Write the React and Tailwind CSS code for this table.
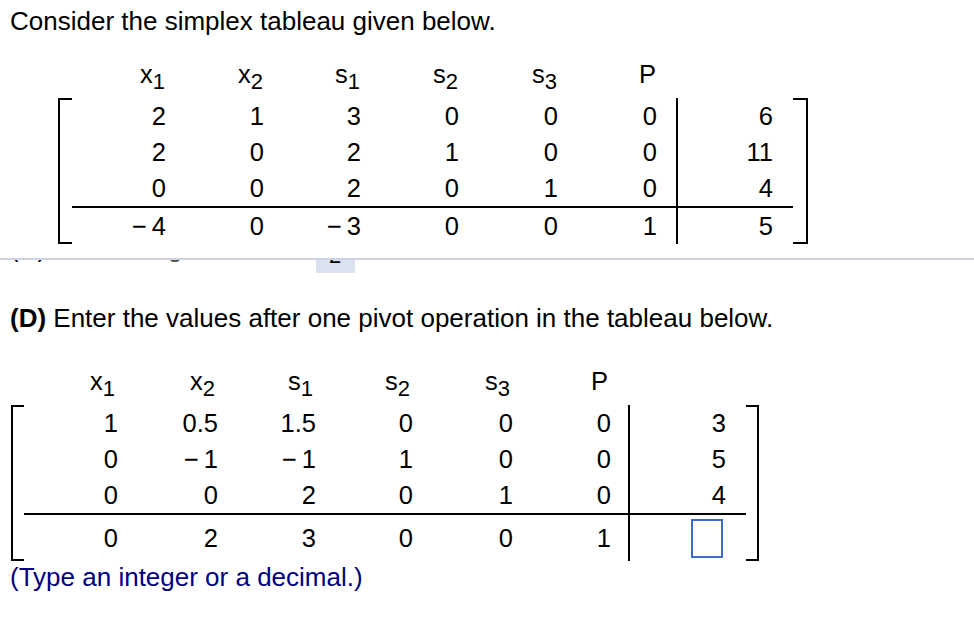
import React from "react";

const top = {
  bracketMl: "ml-[58px]",
  lBracket: "w-[14px]",
  rBracket: "w-[15px]",
  cols: ["w-[94px]", "w-[98px]", "w-[97px]", "w-[98px]", "w-[99px]", "w-[99px]"],
  gap: "w-[19px]",
  val: "w-[97px]",
  tail: "w-[20px]",
  headPad: "pr-[1px]",
  lastRow: "h-[38px]",
  rows: [
    ["2", "1", "3", "0", "0", "0", "6"],
    ["2", "0", "2", "1", "0", "0", "11"],
    ["0", "0", "2", "0", "1", "0", "4"],
  ],
  last: ["-4", "0", "-3", "0", "0", "1", "5"],
};

const bottom = {
  bracketMl: "ml-[11px]",
  lBracket: "w-[13px]",
  rBracket: "w-[13px]",
  cols: ["w-[94px]", "w-[100px]", "w-[98px]", "w-[97px]", "w-[100px]", "w-[98px]"],
  gap: "w-[17px]",
  val: "w-[98px]",
  tail: "w-[20px]",
  headPad: "pr-[3px]",
  lastRow: "h-[48px]",
  rows: [
    ["1", "0.5", "1.5", "0", "0", "0", "3"],
    ["0", "-1", "-1", "1", "0", "0", "5"],
    ["0", "0", "2", "0", "1", "0", "4"],
  ],
  last: ["0", "2", "3", "0", "0", "1", null],
};

const heads = [
  ["x", "1"],
  ["x", "2"],
  ["s", "1"],
  ["s", "2"],
  ["s", "3"],
  ["P", null],
];

function Num({ v }) {
  if (v && v.startsWith("-")) {
    return (
      <span>
        <span className="mr-[5px]">−</span>
        {v.slice(1)}
      </span>
    );
  }
  return <span>{v}</span>;
}

function Head({ name, sub }) {
  return (
    <span>
      {name}
      {sub && <span className="relative top-[6px] text-[22px]">{sub}</span>}
    </span>
  );
}

function Row({ t, cells, className = "h-[36px]" }) {
  return (
    <div className={`flex items-center leading-[36px] ${className}`}>
      {t.cols.map((w, i) => (
        <div key={i} className={`${w} shrink-0 text-right`}>
          <Num v={cells[i]} />
        </div>
      ))}
      <div className={`${t.gap} shrink-0`} />
      <div
        className={`${t.val} shrink-0 self-stretch border-l-2 border-black flex items-center justify-end`}
      >
        {cells[6] === null ? (
          <div className="w-[32px] h-[39px] mr-[3px] border-2 border-[#3b6cc8] bg-white" />
        ) : (
          <Num v={cells[6]} />
        )}
      </div>
      <div className={`${t.tail} shrink-0`} />
    </div>
  );
}

function Tableau({ t, className = "" }) {
  return (
    <div className={`text-[25.5px] text-black ${className}`}>
      {/* header labels */}
      <div className={`flex h-[36px] leading-[36px] mb-[6px] ${t.bracketMl}`}>
        <div className={`${t.lBracket} shrink-0`} />
        {t.cols.map((w, i) => (
          <div key={i} className={`${w} shrink-0 text-right ${t.headPad}`}>
            <Head name={heads[i][0]} sub={heads[i][1]} />
          </div>
        ))}
      </div>

      <div className={`flex ${t.bracketMl}`}>
        <div className={`${t.lBracket} shrink-0 border-l-2 border-y-2 border-black`} />
        <div className="flex flex-col">
          {t.rows.map((r, i) => (
            <Row key={i} t={t} cells={r} />
          ))}
          <Row t={t} cells={t.last} className={`${t.lastRow} border-t-2 border-black`} />
        </div>
        <div className={`${t.rBracket} shrink-0 border-r-2 border-y-2 border-black`} />
      </div>
    </div>
  );
}

export default function App() {
  return (
    <div className="w-[974px] h-[626px] bg-white overflow-hidden font-['Liberation_Sans',Arial,sans-serif] text-black">
      <div className="pt-[5px] pl-[10px] text-[26px] leading-[32px]">
        Consider the simplex tableau given below.
      </div>

      <Tableau t={top} className="mt-[19px]" />

      {/* divider, with the bottoms of the scrolled line peeking under it */}
      <div className="mt-[14px] h-[2px] bg-[#cfd3df]" />
      <div className="h-[15px] overflow-hidden flex items-start text-[26px] leading-[32px]">
        <span className="ml-[10px] -mt-[28px] shrink-0">(C)</span>
        <span className="ml-[122px] -mt-[28px] shrink-0 text-[#555]">g</span>
        <div className="ml-[133px] w-[39px] h-[13px] bg-[#dae2ef] shrink-0 flex justify-center overflow-hidden">
          <span className="-mt-[22px] text-[22px] leading-[36px]">2</span>
        </div>
      </div>

      <div className="mt-[27px] pl-[10px] text-[26px] leading-[32px]">
        <span className="font-bold">(D)</span> Enter the values after one pivot operation in the tableau below.
      </div>

      <Tableau t={bottom} className="mt-[29px]" />

      <div className="pl-[10px] text-[26px] leading-[32px] text-[#00007f]">
        (Type an integer or a decimal.)
      </div>
    </div>
  );
}
